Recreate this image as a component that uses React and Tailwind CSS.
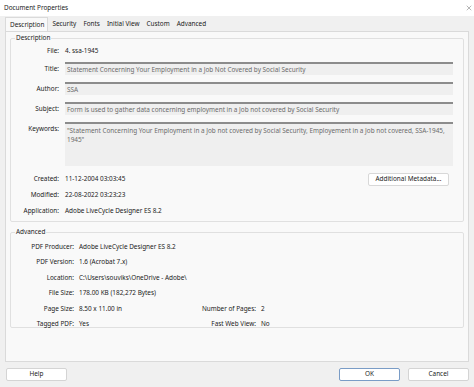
import { X } from 'lucide-react';

const TABS = ['Description', 'Security', 'Fonts', 'Initial View', 'Custom', 'Advanced'];

function Field({ label, children, className = '' }) {
  return (
    <div className={`flex items-center ${className}`}>
      <span className="w-[48px] shrink-0 text-right">{label}</span>
      <div className="ml-[6px] flex-1">{children}</div>
    </div>
  );
}

function Input({ value, tall }) {
  return (
    <div
      className={`w-[388px] bg-[#efefef] border-t-2 border-[#8c8c8c] px-[2px] text-[#6b6b6b] leading-[9px] ${
        tall ? 'h-[44px] pt-[2px]' : 'h-[13px] flex items-center'
      }`}
    >
      {value}
    </div>
  );
}

function Button({ children, primary, className = '' }) {
  return (
    <button
      className={`h-[13px] w-[61px] bg-white rounded-[2px] border text-[#1a1a1a] leading-none ${
        primary ? 'border-[#7a9cc6]' : 'border-[#d4d4d4]'
      } ${className}`}
    >
      {children}
    </button>
  );
}

export default function App() {
  const advanced = [
    ['PDF Producer:', 'Adobe LiveCycle Designer ES 8.2'],
    ['PDF Version:', '1.6 (Acrobat 7.x)'],
    ['Location:', 'C:\\Users\\souviks\\OneDrive - Adobe\\'],
    ['File Size:', '178.00 KB (182,272 Bytes)'],
  ];

  return (
    <div className="w-[474px] h-[387px] bg-white flex flex-col text-[6.4px] text-[#1a1a1a] font-['Noto_Sans',sans-serif] overflow-hidden">
      <div className="h-[16px] shrink-0 flex items-center justify-between pl-[4px] pr-[1px]">
        <span>Document Properties</span>
        <X size={8} strokeWidth={1.2} className="text-[#444]" />
      </div>

      <div className="flex-1 bg-[#f0f0f0] flex flex-col px-[5px]">
        <div className="h-[15px] flex items-end">
          {TABS.map((tab, i) => (
            <div
              key={tab}
              className={`h-[14px] flex items-center whitespace-nowrap ${
                i === 0
                  ? 'bg-[#f9f9f9] border border-b-0 border-[#dadada] pl-[4px] pr-[3px] mr-[1px]'
                  : 'px-[3px] mr-[1px]'
              }`}
            >
              {tab}
            </div>
          ))}
        </div>

        <div className="h-[331px] bg-[#f9f9f9] border border-[#dadada] px-[4px] pt-[1px]">
          <fieldset className="border border-[#e0e0e0] rounded-[2px] px-0 pb-[3px] h-[189px]">
            <legend className="ml-[4px] px-[1px] leading-[10px]">Description</legend>
            <div className="flex flex-col">
              <Field label="File:" className="h-[14px] mt-[1px]">4. ssa-1945</Field>
              <Field label="Title:" className="mt-[4px]">
                <Input value="Statement Concerning Your Employment in a Job Not Covered by Social Security" />
              </Field>
              <Field label="Author:" className="mt-[7px]">
                <Input value="SSA" />
              </Field>
              <Field label="Subject:" className="mt-[7px]">
                <Input value="Form is used to gather data concerning employment in a Job not covered by Social Security" />
              </Field>
              <div className="flex items-start mt-[7px]">
                <span className="w-[48px] shrink-0 text-right pt-[2px]">Keywords:</span>
                <div className="ml-[6px]">
                  <Input
                    tall
                    value={'"Statement Concerning Your Employment in a Job not covered by Social Security, Employement in a Job not covered, SSA-1945, 1945"'}
                  />
                </div>
              </div>
              <div className="flex items-center justify-between h-[14px] mt-[6px] pr-[14px]">
                <div className="flex">
                  <span className="w-[48px] text-right">Created:</span>
                  <span className="ml-[6px]">11-12-2004 03:03:45</span>
                </div>
                <button className="h-[13px] w-[81px] bg-white border border-[#d8d8d8] rounded-[2px] leading-none">
                  Additional Metadata...
                </button>
              </div>
              <Field label="Modified:" className="h-[15px] mt-[1px]">22-08-2022 03:23:23</Field>
              <Field label="Application:" className="h-[15px] mt-[1px]">Adobe LiveCycle Designer ES 8.2</Field>
            </div>
          </fieldset>

          <fieldset className="border border-[#e0e0e0] rounded-[2px] px-0 mt-[5px] h-[101px]">
            <legend className="ml-[4px] px-[1px] leading-[10px]">Advanced</legend>
            <div className="flex flex-col pt-[2px]">
              {advanced.map(([label, value]) => (
                <div key={label} className="flex items-center h-[15.5px]">
                  <span className="w-[63px] text-right">{label}</span>
                  <span className="ml-[5px]">{value}</span>
                </div>
              ))}
              <div className="flex items-center h-[15.5px] whitespace-nowrap">
                <span className="w-[63px] text-right">Page Size:</span>
                <span className="ml-[5px] w-[107px]">8.50 x 11.00 in</span>
                <span className="w-[70px] text-right">Number of Pages:</span>
                <span className="ml-[5px]">2</span>
              </div>
              <div className="flex items-center h-[15.5px] whitespace-nowrap">
                <span className="w-[63px] text-right">Tagged PDF:</span>
                <span className="ml-[5px] w-[107px]">Yes</span>
                <span className="w-[70px] text-right">Fast Web View:</span>
                <span className="ml-[5px]">No</span>
              </div>
            </div>
          </fieldset>
        </div>

        <div className="flex items-center h-[24px] pt-[1px]">
          <Button className="ml-[1px]">Help</Button>
          <div className="flex-1" />
          <Button primary>OK</Button>
          <Button className="ml-[8px]">Cancel</Button>
        </div>
      </div>
    </div>
  );
}
